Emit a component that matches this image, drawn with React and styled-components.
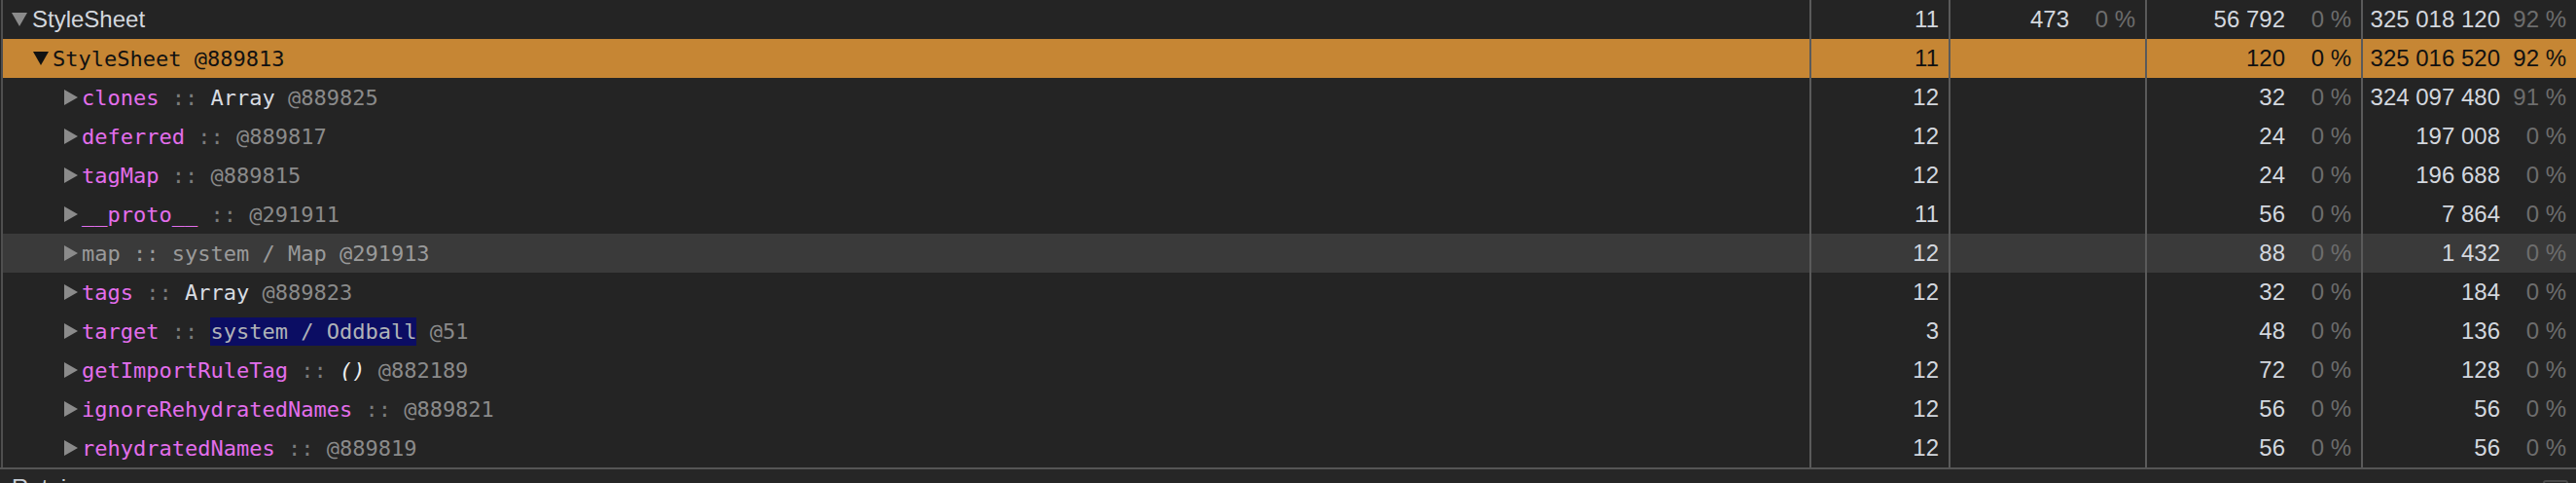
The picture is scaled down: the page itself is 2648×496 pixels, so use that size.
import React from 'react';
import styled, { createGlobalStyle } from 'styled-components';

const GlobalStyle = createGlobalStyle`
  html, body {
    margin: 0;
    padding: 0;
    background: #242424;
    overflow: hidden;
  }
`;

const rows = [
  { level: 0, open: true, root: 'StyleSheet', dist: '11', count: '473', countPct: '0 %', shallow: '56 792', shallowPct: '0 %', retained: '325 018 120', retainedPct: '92 %' },
  { level: 1, open: true, selected: true, parts: [['plain', 'StyleSheet @889813']], dist: '11', shallow: '120', shallowPct: '0 %', retained: '325 016 520', retainedPct: '92 %' },
  { level: 2, parts: [['prop', 'clones'], ['sep', ' :: '], ['type', 'Array'], ['id', ' @889825']], dist: '12', shallow: '32', shallowPct: '0 %', retained: '324 097 480', retainedPct: '91 %' },
  { level: 2, parts: [['prop', 'deferred'], ['sep', ' :: '], ['id', '@889817']], dist: '12', shallow: '24', shallowPct: '0 %', retained: '197 008', retainedPct: '0 %' },
  { level: 2, parts: [['prop', 'tagMap'], ['sep', ' :: '], ['id', '@889815']], dist: '12', shallow: '24', shallowPct: '0 %', retained: '196 688', retainedPct: '0 %' },
  { level: 2, parts: [['prop', '__proto__'], ['sep', ' :: '], ['id', '@291911']], dist: '11', shallow: '56', shallowPct: '0 %', retained: '7 864', retainedPct: '0 %' },
  { level: 2, hover: true, parts: [['dim', 'map :: system / Map @291913']], dist: '12', shallow: '88', shallowPct: '0 %', retained: '1 432', retainedPct: '0 %' },
  { level: 2, parts: [['prop', 'tags'], ['sep', ' :: '], ['type', 'Array'], ['id', ' @889823']], dist: '12', shallow: '32', shallowPct: '0 %', retained: '184', retainedPct: '0 %' },
  { level: 2, parts: [['prop', 'target'], ['sep', ' :: '], ['mark', 'system / Oddball'], ['id', ' @51']], dist: '3', shallow: '48', shallowPct: '0 %', retained: '136', retainedPct: '0 %' },
  { level: 2, parts: [['prop', 'getImportRuleTag'], ['sep', ' :: '], ['fn', '()'], ['id', ' @882189']], dist: '12', shallow: '72', shallowPct: '0 %', retained: '128', retainedPct: '0 %' },
  { level: 2, parts: [['prop', 'ignoreRehydratedNames'], ['sep', ' :: '], ['id', '@889821']], dist: '12', shallow: '56', shallowPct: '0 %', retained: '56', retainedPct: '0 %' },
  { level: 2, parts: [['prop', 'rehydratedNames'], ['sep', ' :: '], ['id', '@889819']], dist: '12', shallow: '56', shallowPct: '0 %', retained: '56', retainedPct: '0 %' },
];

const indent = [12, 34, 66];

function Arrow({ open, dark }) {
  const fill = dark ? '#111' : '#8b8b8b';
  if (open) {
    return (
      <ArrowSvg width="16" height="14" viewBox="0 0 16 14">
        <polygon points="0,0 16,0 8,14" fill={fill} />
      </ArrowSvg>
    );
  }
  return (
    <ArrowSvg width="14" height="16" viewBox="0 0 14 16">
      <polygon points="0,0 14,8 0,16" fill={fill} />
    </ArrowSvg>
  );
}

function NumberCell({ value, pct, selected }) {
  return (
    <NumCell $selected={selected}>
      <Value>{value}</Value>
      {pct !== undefined && <Percent $selected={selected}>{pct}</Percent>}
    </NumCell>
  );
}

function App() {
  return (
    <>
      <GlobalStyle />
      <Panel>
        <Grid>
          {rows.map((r, i) => (
            <Row key={i} $selected={r.selected} $hover={r.hover}>
              <NameCell $indent={indent[r.level]} $root={!!r.root}>
                <Arrow open={r.open} dark={r.selected} />
                {r.root ? (
                  <RootName>{r.root}</RootName>
                ) : (
                  <Code $selected={r.selected}>
                    {r.parts.map(([kind, text], j) => (
                      <Token key={j} $kind={kind}>{text}</Token>
                    ))}
                  </Code>
                )}
              </NameCell>
              <NumberCell value={r.dist} selected={r.selected} />
              <NumCell $selected={r.selected}>
                {r.count && (
                  <>
                    <Value>{r.count}</Value>
                    <Percent $selected={r.selected}>{r.countPct}</Percent>
                  </>
                )}
              </NumCell>
              <NumberCell value={r.shallow} pct={r.shallowPct} selected={r.selected} />
              <NumberCell value={r.retained} pct={r.retainedPct} selected={r.selected} />
            </Row>
          ))}
        </Grid>
        <Footer>
          <FooterTitle>Retainers</FooterTitle>
          <FooterButton />
        </Footer>
      </Panel>
    </>
  );
}

const Panel = styled.div`
  width: 2648px;
  height: 496px;
  background: #242424;
  overflow: hidden;
  display: flex;
  flex-direction: column;
`;

const Grid = styled.div`
  margin-left: 1px;
  border-left: 2px solid #4f4f4f;
  display: flex;
  flex-direction: column;
`;

const Row = styled.div`
  height: 40px;
  display: grid;
  grid-template-columns: 1fr 143px 202px 222px 221px;
  background: ${(p) => (p.$selected ? '#c68634' : p.$hover ? '#3a3a3a' : 'transparent')};
`;

const NameCell = styled.div`
  display: flex;
  align-items: center;
  gap: ${(p) => (p.$root ? '5px' : '4px')};
  padding-left: ${(p) => p.$indent - 3}px;
  overflow: hidden;
  white-space: nowrap;
`;

const ArrowSvg = styled.svg`
  flex: none;
  display: block;
`;

const RootName = styled.span`
  font-family: "Liberation Sans", Arial, sans-serif;
  font-size: 24px;
  color: #d3d7dd;
`;

const Code = styled.span`
  font-family: "DejaVu Sans Mono", Menlo, monospace;
  font-size: 22px;
  white-space: pre;
  color: ${(p) => (p.$selected ? '#111' : '#d5d9df')};
`;

const tokenColors = {
  plain: 'inherit',
  prop: '#e36eec',
  sep: '#7b7b7b',
  type: '#d8dce2',
  id: '#8a8a8a',
  dim: '#9a9a9a',
  mark: '#b0b3b8',
  fn: '#eeeeee',
};

const Token = styled.span`
  color: ${(p) => tokenColors[p.$kind]};
  font-style: ${(p) => (p.$kind === 'fn' ? 'italic' : 'normal')};
  background: ${(p) => (p.$kind === 'mark' ? '#0b0d63' : 'transparent')};
  padding: ${(p) => (p.$kind === 'mark' ? '2px 0' : '0')};
`;

const NumCell = styled.div`
  border-left: 2px solid #5a5a5a;
  display: flex;
  align-items: center;
  justify-content: flex-end;
  padding-right: 10px;
  font-family: "Liberation Sans", Arial, sans-serif;
  font-size: 24px;
  color: ${(p) => (p.$selected ? '#111' : '#d3d7de')};
  white-space: nowrap;
`;

const Value = styled.span``;

const Percent = styled.span`
  width: 68px;
  text-align: right;
  color: ${(p) => (p.$selected ? '#111' : '#6d6d6d')};
`;

const Footer = styled.div`
  border-top: 2px solid #555555;
  background: #262626;
  flex: 1;
  display: flex;
  justify-content: space-between;
  align-items: flex-start;
  padding: 7px 8px 0 12px;
`;

const FooterTitle = styled.span`
  font-family: "Liberation Sans", Arial, sans-serif;
  font-size: 24px;
  line-height: 24px;
  color: #c8ced6;
`;

const FooterButton = styled.div`
  margin-top: 4px;
  width: 22px;
  height: 22px;
  border: 2px solid #4a4a4a;
  border-radius: 3px;
`;

export default App;
